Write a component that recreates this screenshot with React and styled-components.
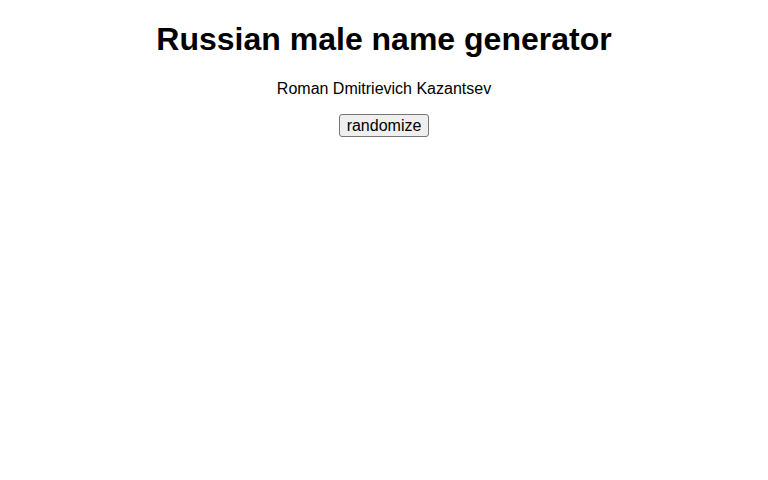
import React, { useState } from "react";
import styled, { createGlobalStyle } from "styled-components";

const Global = createGlobalStyle`
  html, body { margin: 0; padding: 0; background: #fff; }
  body { font-family: "Liberation Sans", Arial, sans-serif; color: #000; }
`;

const Page = styled.main`
  display: flex;
  flex-direction: column;
  align-items: center;
  text-align: center;
`;

const Title = styled.h1`
  font-size: 32px;
  font-weight: bold;
  line-height: 37px;
  margin: 21.44px 0 0;
`;

const Name = styled.p`
  font-size: 16px;
  line-height: 18.4px;
  margin: 21.44px 0 0;
`;

const Button = styled.button`
  margin-top: 16px;
  font-family: "Liberation Sans", Arial, sans-serif;
  font-size: 16px;
  line-height: 19px;
  padding: 1px 7px;
  color: #000;
  background: #efefef;
  border: 1px solid #767676;
  border-radius: 3px;
  cursor: pointer;
  &:hover { background: #e5e5e5; }
`;

const first = ["Roman", "Ivan", "Sergei", "Alexei", "Dmitri", "Nikolai"];
const patr = ["Dmitrievich", "Ivanovich", "Sergeevich", "Petrovich", "Alexandrovich"];
const last = ["Kazantsev", "Ivanov", "Smirnov", "Petrov", "Sokolov"];
const pick = (a) => a[Math.floor(Math.random() * a.length)];

export default function App() {
  const [name, setName] = useState("Roman Dmitrievich Kazantsev");
  return (
    <>
      <Global />
      <Page>
        <Title>Russian male name generator</Title>
        <Name>{name}</Name>
        <div>
          <Button onClick={() => setName(`${pick(first)} ${pick(patr)} ${pick(last)}`)}>
            randomize
          </Button>
        </div>
      </Page>
    </>
  );
}
